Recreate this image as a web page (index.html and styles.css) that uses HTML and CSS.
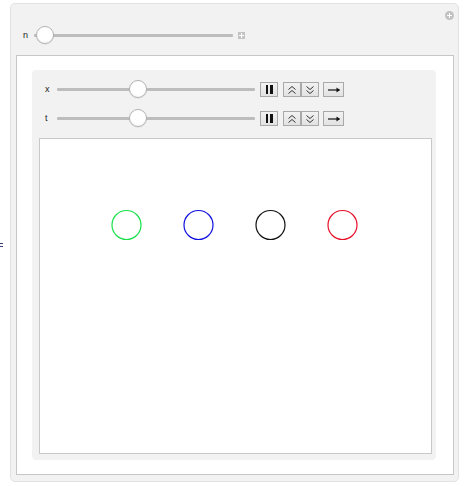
FILE: index.html
```html
<!DOCTYPE html>
<html>
<head>
<meta charset="utf-8">
<link rel="stylesheet" href="styles.css">
</head>
<body>
<div class="page">
  <div class="gutter"><span class="eq"></span></div>
  <div class="outer">
    <span class="corner-plus"></span>
    <div class="nrow">
      <span class="lbl lbl-n">n</span>
      <div class="slider slider-n"><span class="thumb" style="left:2px"></span></div>
      <span class="mini-plus"></span>
    </div>
    <div class="whitebox">
      <div class="panel">
        <div class="crow">
          <span class="lbl lbl-x">x</span>
          <div class="slider slider-x"><span class="thumb" style="left:72px"></span></div>
          <span class="btn btn-pause"><span class="bar"></span><span class="bar"></span></span>
          <span class="btn-group">
            <span class="btn btn-chev"><svg width="10" height="10" viewBox="0 0 10 10"><path d="M1.5 4.5 L5 1.5 L8.5 4.5 M1.5 8.5 L5 5.5 L8.5 8.5" fill="none" stroke="#333" stroke-width="1"/></svg></span>
            <span class="btn btn-chev"><svg width="10" height="10" viewBox="0 0 10 10"><path d="M1.5 1.5 L5 4.5 L8.5 1.5 M1.5 5.5 L5 8.5 L8.5 5.5" fill="none" stroke="#333" stroke-width="1"/></svg></span>
          </span>
          <span class="btn btn-arrow"><svg width="16" height="10" viewBox="0 0 16 10"><path d="M2 5 H13.5" stroke="#111" stroke-width="1.2"/><path d="M10.5 2.5 L14 5 L10.5 7.5 Z" fill="#111"/></svg></span>
        </div>
        <div class="crow">
          <span class="lbl lbl-x">t</span>
          <div class="slider slider-x"><span class="thumb" style="left:72px"></span></div>
          <span class="btn btn-pause"><span class="bar"></span><span class="bar"></span></span>
          <span class="btn-group">
            <span class="btn btn-chev"><svg width="10" height="10" viewBox="0 0 10 10"><path d="M1.5 4.5 L5 1.5 L8.5 4.5 M1.5 8.5 L5 5.5 L8.5 8.5" fill="none" stroke="#333" stroke-width="1"/></svg></span>
            <span class="btn btn-chev"><svg width="10" height="10" viewBox="0 0 10 10"><path d="M1.5 1.5 L5 4.5 L8.5 1.5 M1.5 5.5 L5 8.5 L8.5 5.5" fill="none" stroke="#333" stroke-width="1"/></svg></span>
          </span>
          <span class="btn btn-arrow"><svg width="16" height="10" viewBox="0 0 16 10"><path d="M2 5 H13.5" stroke="#111" stroke-width="1.2"/><path d="M10.5 2.5 L14 5 L10.5 7.5 Z" fill="#111"/></svg></span>
        </div>
        <div class="graphics">
          <svg width="391" height="314" viewBox="0 0 391 314">
            <circle cx="86.5" cy="86" r="14.5" fill="none" stroke="#19e04a" stroke-width="1.2"/>
            <circle cx="158.5" cy="86" r="14.5" fill="none" stroke="#1010e0" stroke-width="1.2"/>
            <circle cx="230.5" cy="86" r="14.5" fill="none" stroke="#111111" stroke-width="1.2"/>
            <circle cx="302.5" cy="86" r="14.5" fill="none" stroke="#e8102a" stroke-width="1.2"/>
          </svg>
        </div>
      </div>
    </div>
  </div>
</div>
</body>
</html>
```

FILE: styles.css
```css
html, body {
  margin: 0;
  padding: 0;
  background: #ffffff;
  font-family: "Liberation Sans", Arial, sans-serif;
}

.page {
  display: flex;
  padding-top: 3px;
}

.gutter {
  width: 10px;
  display: flex;
  align-items: center;
}

.eq {
  display: block;
  width: 3px;
  height: 2px;
  margin-top: 4px;
  border-top: 1px solid #3b3b78;
  border-bottom: 1px solid #3b3b78;
}

.outer {
  position: relative;
  box-sizing: border-box;
  width: 449px;
  height: 479px;
  background: #f2f2f2;
  border: 1px solid #e2e2e2;
  border-radius: 5px;
  padding: 22px 0 0 5px;
}

.corner-plus {
  position: absolute;
  top: 7px;
  right: 4px;
  width: 9px;
  height: 9px;
  border-radius: 50%;
  background: #c2c2c2;
}
.corner-plus::before,
.corner-plus::after {
  content: "";
  position: absolute;
  background: #ffffff;
}
.corner-plus::before { left: 2px; top: 4px; width: 5px; height: 1px; }
.corner-plus::after { left: 4px; top: 2px; width: 1px; height: 5px; }

.nrow {
  display: flex;
  align-items: center;
  height: 18px;
  margin-left: 7px;
}

.lbl {
  font-size: 9px;
  color: #222;
  line-height: 18px;
}
.lbl-n { width: 11px; }
.lbl-x { width: 12px; }

.slider {
  position: relative;
  height: 18px;
}
.slider::before {
  content: "";
  position: absolute;
  left: 0;
  right: 0;
  top: 8px;
  height: 3px;
  background: #bdbdbd;
  border-radius: 1px;
}
.slider-n { width: 199px; }
.slider-x { width: 198px; }

.thumb {
  position: absolute;
  top: 0;
  box-sizing: border-box;
  width: 18px;
  height: 18px;
  border-radius: 50%;
  background: radial-gradient(circle at 50% 35%, #ffffff 55%, #f4f4f4 100%);
  border: 1px solid #b4b4b4;
  box-shadow: 0 0.5px 1px rgba(0,0,0,0.12);
}

.mini-plus {
  position: relative;
  width: 7px;
  height: 7px;
  margin-left: 5px;
  margin-top: 1px;
  background: #c4c4c4;
}
.mini-plus::before,
.mini-plus::after {
  content: "";
  position: absolute;
  background: #ffffff;
}
.mini-plus::before { left: 1px; top: 3px; width: 5px; height: 1px; }
.mini-plus::after { left: 3px; top: 1px; width: 1px; height: 5px; }

.whitebox {
  box-sizing: border-box;
  width: 438px;
  height: 420px;
  margin-top: 11px;
  background: #ffffff;
  border: 1px solid #c6c6c6;
  padding: 14px 0 0 15px;
}

.panel {
  box-sizing: border-box;
  width: 404px;
  height: 390px;
  background: #f2f2f2;
  border-radius: 4px;
  padding-top: 10px;
  display: flex;
  flex-direction: column;
  gap: 11px;
}

.crow {
  display: flex;
  align-items: center;
  height: 18px;
  padding-left: 13px;
}

.btn {
  box-sizing: border-box;
  height: 15px;
  border: 1px solid #a9a9a9;
  background: linear-gradient(#f2f2f2, #e2e2e2);
  display: flex;
  align-items: center;
  justify-content: center;
}

.btn-pause {
  width: 18px;
  margin-left: 5px;
  gap: 2px;
  margin-top: 1px;
}
.bar {
  width: 2.5px;
  height: 9px;
  background: #111;
}

.btn-group {
  display: flex;
  margin-left: 5px;
  margin-top: 1px;
}
.btn-chev { width: 18px; }

.btn-arrow {
  width: 21px;
  margin-left: 4px;
  margin-top: 1px;
}

.graphics {
  box-sizing: border-box;
  width: 393px;
  height: 316px;
  margin-left: 7px;
  background: #ffffff;
  border: 1px solid #c8c8c8;
}
.graphics svg { display: block; }
```
